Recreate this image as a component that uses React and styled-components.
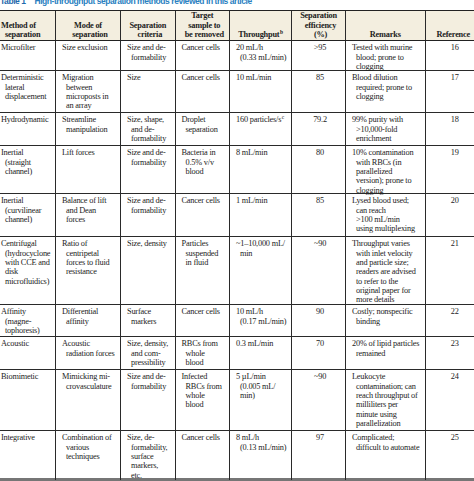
import React from "react";
import styled, { createGlobalStyle } from "styled-components";

const GlobalStyle = createGlobalStyle`
  html, body { margin: 0; padding: 0; background: #ffffff; overflow: hidden; }
  #root { width: 474px; height: 481px; }
`;

const COLS = "61px 65px 54.5px 54.5px 62px 54px 79.5px 55.5px";

const Page = styled.div`
  width: 474px;
  height: 481px;
  overflow: hidden;
  background: #fff;
`;

const Title = styled.div`
  height: 10px;
  margin: -4.3px 0 4.3px 0;
  font-family: "Liberation Sans", "DejaVu Sans", sans-serif;
  font-size: 8.5px;
  line-height: 10px;
  letter-spacing: -0.45px;
  font-weight: 700;
  color: #2a7fc1;
  white-space: nowrap;
`;

const TitleLabel = styled.span`
  color: #1f6aad;
  margin-right: 9px;
`;

const Table = styled.div`
  margin-left: -5px;
  width: 486px;
  border-top: 1px solid #222;
  font-family: "Liberation Serif", "Times New Roman", serif;
  font-size: 8.3px;
  letter-spacing: -0.2px;
  color: #1c1c1c;
`;

const HeaderRow = styled.div`
  display: grid;
  grid-template-columns: ${COLS};
  height: 30px;
  box-sizing: border-box;
  background: #f3eedf;
  border-bottom: 1px solid #222;
`;

const Row = styled.div`
  display: grid;
  grid-template-columns: ${COLS};
  height: ${(p) => p.$h}px;
  box-sizing: border-box;
  border-bottom: ${(p) => (p.$last ? "none" : "1px solid #2a2a2a")};
`;

const HeadCell = styled.div`
  display: flex;
  flex-direction: column;
  justify-content: flex-end;
  align-items: ${(p) => (p.$left ? "flex-start" : "center")};
  box-sizing: border-box;
  padding: 0 3px 0.5px ${(p) => (p.$left ? "6px" : "3px")};
  border-right: 1px solid #2a2a2a;
  font-weight: 700;
  &:last-child { border-right: none; }
`;

const Cell = styled.div`
  display: flex;
  flex-direction: column;
  align-items: ${(p) => (p.$center ? "center" : "flex-start")};
  box-sizing: border-box;
  padding: 2.3px 3px 0 6px;
  border-right: 1px solid #2a2a2a;
  &:last-child { border-right: none; }
`;

const Line = styled.span`
  display: block;
  white-space: nowrap;
  line-height: 9.35px;
  & + & { padding-left: ${(p) => (p.$noIndent ? 0 : 4)}px; }
`;

const Sup = styled.sup`
  font-size: 5.5px;
  line-height: 0;
  vertical-align: 3px;
  margin-left: 0.5px;
`;

const BottomRule = styled.div`
  height: 4px;
  background: #767676;
`;

const header = [
  { lines: ["Method of", "separation"], left: true },
  { lines: ["Mode of", "separation"] },
  { lines: ["Separation", "criteria"] },
  { lines: ["Target", "sample to", "be removed"] },
  { lines: [<>Throughput<Sup>b</Sup></>] },
  { lines: ["Separation", "efficiency", "(%)"] },
  { lines: ["Remarks"] },
  { lines: ["Reference"] },
];

const rows = [
  {
    h: 30,
    cells: [
      ["Microfilter"],
      ["Size exclusion"],
      ["Size and de-", "formability"],
      ["Cancer cells"],
      ["20 mL/h", "(0.33 mL/min)"],
      [">95"],
      ["Tested with murine", "blood; prone to", "clogging"],
      ["16"],
    ],
  },
  {
    h: 42,
    cells: [
      ["Deterministic", "lateral", "displacement"],
      ["Migration", "between", "microposts in", "an array"],
      ["Size"],
      ["Cancer cells"],
      ["10 mL/min"],
      ["85"],
      ["Blood dilution", "required; prone to", "clogging"],
      ["17"],
    ],
  },
  {
    h: 33,
    cells: [
      ["Hydrodynamic"],
      ["Streamline", "manipulation"],
      ["Size, shape,", "and de-", "formability"],
      ["Droplet", "separation"],
      [<>160 particles/s<Sup>c</Sup></>],
      ["79.2"],
      ["99% purity with", ">10,000-fold", "enrichment"],
      ["18"],
    ],
  },
  {
    h: 48,
    cells: [
      ["Inertial", "(straight", "channel)"],
      ["Lift forces"],
      ["Size and de-", "formability"],
      ["Bacteria in", "0.5% v/v", "blood"],
      ["8 mL/min"],
      ["80"],
      ["10% contamination", "with RBCs (in", "parallelized", "version); prone to", "clogging"],
      ["19"],
    ],
  },
  {
    h: 43,
    cells: [
      ["Inertial", "(curvilinear", "channel)"],
      ["Balance of lift", "and Dean", "forces"],
      ["Size and de-", "formability"],
      ["Cancer cells"],
      ["1 mL/min"],
      ["85"],
      ["Lysed blood used;", "can reach", ">100 mL/min", "using multiplexing"],
      ["20"],
    ],
  },
  {
    h: 68,
    cells: [
      ["Centrifugal", "(hydrocyclone", "with CCE and", "disk", "microfluidics)"],
      ["Ratio of", "centripetal", "forces to fluid", "resistance"],
      ["Size, density"],
      ["Particles", "suspended", "in fluid"],
      ["~1–10,000 mL/", "min"],
      ["~90"],
      [
        "Throughput varies",
        "with inlet velocity",
        "and particle size;",
        "readers are advised",
        "to refer to the",
        "original paper for",
        "more details",
      ],
      ["21"],
    ],
  },
  {
    h: 32,
    cells: [
      ["Affinity", "(magne-", "tophoresis)"],
      ["Differential", "affinity"],
      ["Surface", "markers"],
      ["Cancer cells"],
      ["10 mL/h", "(0.17 mL/min)"],
      ["90"],
      ["Costly; nonspecific", "binding"],
      ["22"],
    ],
  },
  {
    h: 33,
    cells: [
      ["Acoustic"],
      ["Acoustic", "radiation forces"],
      ["Size, density,", "and com-", "pressibility"],
      ["RBCs from", "whole", "blood"],
      ["0.3 mL/min"],
      ["70"],
      ["20% of lipid particles", "remained"],
      ["23"],
    ],
  },
  {
    h: 61,
    cells: [
      ["Biomimetic"],
      ["Mimicking mi-", "crovasculature"],
      ["Size and de-", "formability"],
      ["Infected", "RBCs from", "whole", "blood"],
      ["5 µL/min", "(0.005 mL/", "min)"],
      ["~90"],
      [
        "Leukocyte",
        "contamination; can",
        "reach throughput of",
        "milliliters per",
        "minute using",
        "parallelization",
      ],
      ["24"],
    ],
  },
  {
    h: 47,
    last: true,
    cells: [
      ["Integrative"],
      ["Combination of", "various", "techniques"],
      ["Size, de-", "formability,", "surface", "markers,", "etc."],
      ["Cancer cells"],
      ["8 mL/h", "(0.13 mL/min)"],
      ["97"],
      ["Complicated;", "difficult to automate"],
      ["25"],
    ],
  },
];

const CENTERED = [5, 7];

export default function App() {
  return (
    <>
      <GlobalStyle />
      <Page>
        <Title>
          <TitleLabel>Table 1</TitleLabel>High-throughput separation methods reviewed in this article
        </Title>
        <Table>
          <HeaderRow>
            {header.map((h, i) => (
              <HeadCell key={i} $left={h.left}>
                {h.lines.map((l, j) => (
                  <Line key={j} $noIndent>
                    {l}
                  </Line>
                ))}
              </HeadCell>
            ))}
          </HeaderRow>
          {rows.map((r, i) => (
            <Row key={i} $h={r.h} $last={r.last}>
              {r.cells.map((c, j) => (
                <Cell key={j} $center={CENTERED.includes(j)}>
                  {c.map((l, k) => (
                    <Line key={k}>{l}</Line>
                  ))}
                </Cell>
              ))}
            </Row>
          ))}
        </Table>
        <BottomRule />
      </Page>
    </>
  );
}
